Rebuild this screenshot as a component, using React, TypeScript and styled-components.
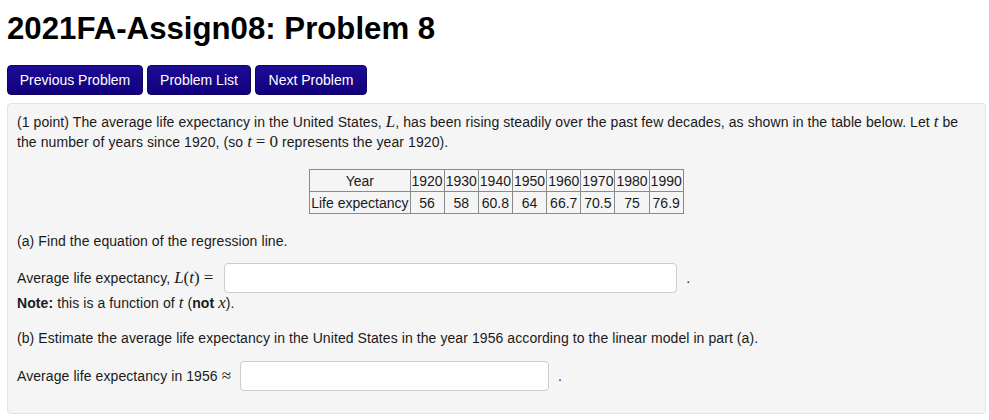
import React from "react";
import styled, { createGlobalStyle } from "styled-components";

const Global = createGlobalStyle`
  html, body { margin: 0; padding: 0; background: #ffffff; }
  body { font-family: "Liberation Sans", Arial, Helvetica, sans-serif; color: #222; }
`;

const Page = styled.div`
  padding: 0 3px 0 7px;
`;

const Title = styled.h1`
  margin: 0;
  padding-top: 13px;
  font-size: 31.2px;
  line-height: 32px;
  font-weight: bold;
  color: #000;
`;

const Nav = styled.div`
  display: flex;
  gap: 4px;
  margin-top: 20px;
`;

const NavButton = styled.button<{ w: number }>`
  width: ${(p) => p.w}px;
  height: 30px;
  padding: 0;
  border: 1px solid #0d0560;
  border-radius: 4px;
  background: linear-gradient(#1c0c96, #12007e);
  color: #fff;
  font-family: "Liberation Sans", Arial, sans-serif;
  font-size: 14px;
  cursor: pointer;
`;

const Box = styled.div`
  margin-top: 8px;
  border: 1px solid #e3e3e3;
  border-radius: 4px;
  background: #f5f5f5;
  padding: 8px 9px 22px 9px;
  font-size: 14px;
  line-height: 20px;
  letter-spacing: 0.08px;
  color: #1a1a1a;
`;

const Para = styled.p<{ mt?: number }>`
  margin: ${(p) => p.mt ?? 0}px 0 0 0;
`;

const M = styled.span`
  font-family: "Liberation Serif", "Times New Roman", serif;
  font-size: 17px;
  line-height: 1;
  letter-spacing: 0;
`;

const MI = styled(M)`
  font-style: italic;
`;

const Op = styled(M)`
  padding: 0 4px;
`;

const TableWrap = styled.div`
  display: flex;
  justify-content: center;
  margin-top: 17px;
`;

const Table = styled.table`
  border-collapse: collapse;
  font-size: 14px;
  letter-spacing: 0;
`;

const Cell = styled.td`
  border: 1px solid #8a8a8a;
  padding: 1px 1px;
  height: 19px;
  text-align: center;
  line-height: 18px;
`;

const Row = styled.div<{ mt: number }>`
  display: flex;
  align-items: center;
  margin-top: ${(p) => p.mt}px;
`;

const Input = styled.div<{ w: number; ml: number }>`
  width: ${(p) => p.w}px;
  height: 30px;
  box-sizing: border-box;
  margin-left: ${(p) => p.ml}px;
  border: 1px solid #cccccc;
  border-radius: 4px;
  background: #fff;
`;

const Dot = styled.span`
  margin-left: 9px;
`;

const years = ["1920", "1930", "1940", "1950", "1960", "1970", "1980", "1990"];
const life = ["56", "58", "60.8", "64", "66.7", "70.5", "75", "76.9"];

export default function App() {
  return (
    <>
      <Global />
      <Page>
        <Title>2021FA-Assign08: Problem 8</Title>
        <Nav>
          <NavButton w={136}>Previous Problem</NavButton>
          <NavButton w={104}>Problem List</NavButton>
          <NavButton w={112}>Next Problem</NavButton>
        </Nav>
        <Box>
          <Para>
            (1 point) The average life expectancy in the United States, <MI>L</MI>, has been rising
            steadily over the past few decades, as shown in the table below. Let <MI>t</MI> be the
            number of years since 1920, (so <MI>t</MI>
            <Op>=</Op>
            <M>0</M> represents the year 1920).
          </Para>
          <TableWrap>
            <Table>
              <tbody>
                <tr>
                  <Cell>Year</Cell>
                  {years.map((y) => (
                    <Cell key={y}>{y}</Cell>
                  ))}
                </tr>
                <tr>
                  <Cell>Life expectancy</Cell>
                  {life.map((v) => (
                    <Cell key={v}>{v}</Cell>
                  ))}
                </tr>
              </tbody>
            </Table>
          </TableWrap>
          <Para mt={17}>(a) Find the equation of the regression line.</Para>
          <Row mt={12}>
            <span>
              Average life expectancy, <MI>L</MI>
              <M>(</M>
              <MI>t</MI>
              <M>)</M>
              <Op>=</Op>
            </span>
            <Input w={453} ml={7} />
            <Dot>.</Dot>
          </Row>
          <Para mt={0}>
            <b>Note:</b> this is a function of <MI>t</MI> (<b>not</b> <MI>x</MI>).
          </Para>
          <Para mt={15}>
            (b) Estimate the average life expectancy in the United States in the year 1956 according
            to the linear model in part (a).
          </Para>
          <Row mt={13}>
            <span>
              Average life expectancy in 1956 <M>≈</M>
            </span>
            <Input w={309} ml={9} />
            <Dot>.</Dot>
          </Row>
        </Box>
      </Page>
    </>
  );
}
